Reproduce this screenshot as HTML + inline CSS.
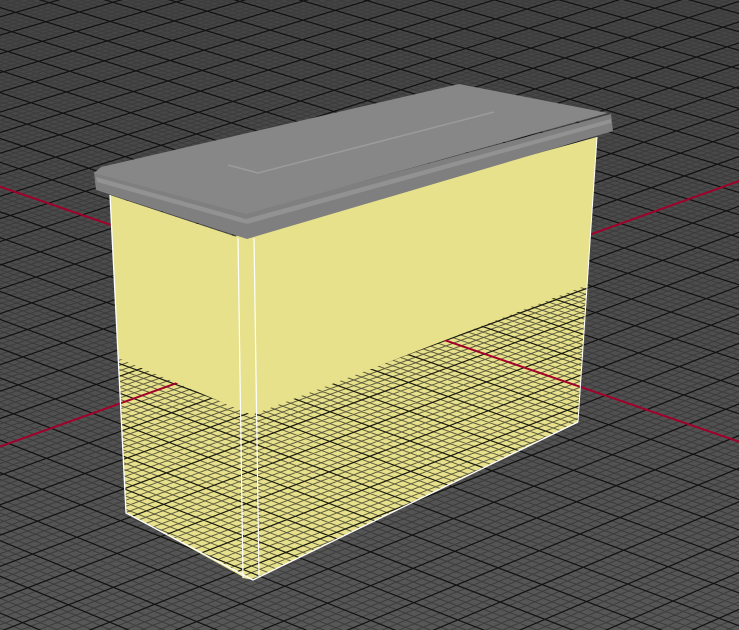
<!DOCTYPE html>
<html><head><meta charset="utf-8"><style>
html,body{margin:0;padding:0;background:#4b4b4b;width:739px;height:630px;overflow:hidden}
svg{display:block}
</style></head><body>
<svg id="s" width="739" height="630" viewBox="0 0 739 630" xmlns="http://www.w3.org/2000/svg">
<defs>
<clipPath id="low"><polygon points="118,358 252,415 590,284 578,422 253,580 126,513"/></clipPath>
<clipPath id="vp"><rect width="739" height="630"/></clipPath>
<linearGradient id="bg" x1="0" y1="0" x2="0" y2="1"><stop offset="0" stop-color="#444"/><stop offset="1" stop-color="#575757"/></linearGradient>
</defs>
<g clip-path="url(#vp)">
<rect width="739" height="630" fill="url(#bg)"/>
<g id="grid"></g>
<polygon points="110,195 240,238 245,578 126,513" fill="#e7e18c"/>
<polygon points="236,236 597,137 578,422 253,580 243,578" fill="#e7e18c"/>
<g id="grid2" clip-path="url(#low)"></g>
<polyline points="110,195 126,513 253,580 578,422" fill="none" stroke="#fff" stroke-width="1.3"/>
<line x1="238" y1="238" x2="243" y2="578" stroke="#fff" stroke-width="1.2"/>
<line x1="254" y1="238" x2="259" y2="577" stroke="#fff" stroke-width="1.2"/>
<line x1="597" y1="137" x2="578" y2="422" stroke="#fff" stroke-width="1"/>
<polygon points="94,172 246,213 611,114 613,131 247,239 96,190" fill="#7f7f7f"/>
<polygon points="96,177 246,219 247,224 97,182" fill="#929292"/>
<polygon points="246,219 611,119 611,123 247,224" fill="#929292"/>
<polygon points="101,167 459,84 608,113 246,214 94,173" fill="#878787"/>
<polyline points="228,165 258,173 494,112" fill="none" stroke="#9b9b9b" stroke-width="1.5"/>
</g>
</svg>
<script>
(function(){
var O=[369,314];
var dA=[0.941,-0.338], dB=[-0.945,-0.326];
var D=6000, L=40;
var VA=[O[0]+D*dA[0],O[1]+D*dA[1]], VB=[O[0]+D*dB[0],O[1]+D*dB[1]];
var k=L/D;
function P(u,v){var w=1+k*u+k*v;return [(O[0]+k*u*VA[0]+k*v*VB[0])/w,(O[1]+k*u*VA[1]+k*v*VB[1])/w];}
function seg(fixU,val,lo,hi){
  var a=fixU?P(val,lo):P(lo,val), b=fixU?P(val,hi):P(hi,val);
  return "M"+a[0].toFixed(1)+","+a[1].toFixed(1)+"L"+b[0].toFixed(1)+","+b[1].toFixed(1);
}
function build(minorCol,majorCol){
  var minor="",major="";
  var R=22;
  for(var i=-R*5;i<=R*5;i++){
    var val=i/5;
    var s1=seg(true,val,-R,R), s2=seg(false,val,-R,R);
    if(i%5===0){ if(i!==0){major+=s1+s2;} }
    else {minor+=s1+s2;}
  }
  var red=seg(true,0,-R,R)+seg(false,0,-R,R);
  return '<path d="'+minor+'" stroke="'+minorCol+'" stroke-width="1" fill="none"/>'+
         '<path d="'+major+'" stroke="'+majorCol+'" stroke-width="1.2" fill="none"/>'+
         '<path d="'+red+'" stroke="#a0002a" stroke-width="2" fill="none"/>';
}
document.getElementById('grid').innerHTML=build('#3c3c3c','#111111');
document.getElementById('grid2').innerHTML=build('#5f5d3e','#1a1a10');
})();
</script>
</body></html>
